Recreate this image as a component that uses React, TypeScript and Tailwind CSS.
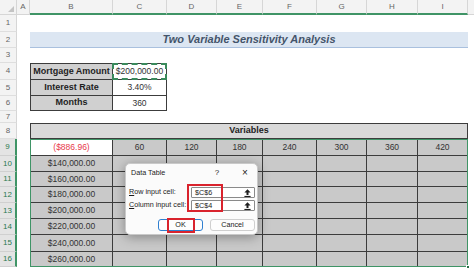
import React from "react";

const letters = ["B", "C", "D", "E", "F", "G", "H", "I"];
const hdrW = ["w-[83px]", "w-[54px]", "w-[50px]", "w-[46px]", "w-[54px]", "w-[50px]", "w-[51px]", "w-[50px]"];
// first column loses 1px to the table's left border
const cellW = ["w-[82px]", "w-[54px]", "w-[50px]", "w-[46px]", "w-[54px]", "w-[50px]", "w-[51px]", "w-[50px]"];

const rowH = [
  "h-[17px]", "h-[16px]", "h-[15px]", "h-[17px]", "h-[16px]", "h-[15px]", "h-[12px]", "h-[16px]",
  "h-[17px]", "h-[16px]", "h-[15px]", "h-[16px]", "h-[16px]", "h-[16px]", "h-[17px]", "h-[15px]",
];
const dataH = rowH.slice(8);

const amounts = ["$140,000.00", "$160,000.00", "$180,000.00", "$200,000.00", "$220,000.00", "$240,000.00", "$260,000.00"];
const months = ["60", "120", "180", "240", "300", "360", "420"];

const CollapseIcon = () => (
  <svg width="7" height="8" viewBox="0 0 7 8">
    <path d="M3.5 0.3 L6.6 3.6 H4.5 V6.1 H2.5 V3.6 H0.4 Z" fill="#1f1f1f" />
    <rect x="0.4" y="6.9" width="6.2" height="1.1" fill="#1f1f1f" />
  </svg>
);

function DataTableDialog() {
  return (
    <div className="absolute left-[125px] top-[163px] w-[133px] h-[72px] bg-[#fbfbfb] border border-[#c9c9c9] rounded-[5px] shadow-[0_2px_12px_rgba(0,0,0,0.35)] text-[7.2px] text-[#1b1b1b]">
      {/* title bar */}
      <div className="flex items-center h-[18px] pl-[5px] pr-[5px]">
        <span>Data Table</span>
        <span className="ml-auto w-[14px] text-center text-[8px]">?</span>
        <span className="ml-[14px] w-[14px] text-center text-[10px] leading-none">×</span>
      </div>

      <div className="mt-[5px] flex flex-col gap-[2px]">
        <div className="flex items-center h-[11px]">
          <span className="w-[65px] pl-[3px] whitespace-nowrap overflow-hidden">
            <span className="underline">R</span>ow input cell:
          </span>
          <div className="flex w-[64px] h-[11px] bg-white border border-[#8a8a8a] rounded-[1px]">
            <span className="flex-1 pl-[3px] leading-[9px]">$C$6</span>
            <span className="w-[13px] flex items-center justify-center">
              <CollapseIcon />
            </span>
          </div>
        </div>
        <div className="flex items-center h-[11px]">
          <span className="w-[65px] pl-[3px] whitespace-nowrap overflow-hidden">
            <span className="underline">C</span>olumn input cell:
          </span>
          <div className="flex w-[64px] h-[11px] bg-white border border-[#8a8a8a] rounded-[1px]">
            <span className="flex-1 pl-[3px] leading-[9px]">$C$4</span>
            <span className="w-[13px] flex items-center justify-center">
              <CollapseIcon />
            </span>
          </div>
        </div>
      </div>

      <div className="mt-[8px] flex justify-end gap-[7px] pr-[2px]">
        <button className="w-[45px] h-[12px] rounded-[3px] border border-[#2f7fd0] bg-[#fdfdfd] text-[7.2px] leading-none">
          OK
        </button>
        <button className="w-[45px] h-[12px] rounded-[3px] border border-[#cfcfcf] bg-[#fdfdfd] text-[7.2px] leading-none">
          Cancel
        </button>
      </div>

      {/* red highlight boxes */}
      <div className="absolute left-[61px] top-[20px] w-[36px] h-[28px] border-2 border-[#d9232d]" />
      <div className="absolute left-[41px] top-[54px] w-[28px] h-[15px] border-2 border-[#d9232d]" />
    </div>
  );
}

export default function App() {
  return (
    <div className="relative w-[474px] h-[271px] overflow-hidden bg-white font-['Liberation_Sans',Arial,sans-serif] text-[#222]">
      {/* column headers */}
      <div className="flex h-[15px] bg-[#f3f3f3] text-[8px] text-[#666]">
        <div className="relative w-[17px] border-r border-b border-[#d6d6d6]">
          <div className="absolute right-[2px] bottom-[2px] w-0 h-0 border-l-[6px] border-l-transparent border-b-[6px] border-b-[#c4c4c4]" />
        </div>
        <div className="w-[13px] flex items-center justify-center border-r border-b border-[#d6d6d6]">A</div>
        {letters.map((l, i) => (
          <div
            key={l}
            className={`${hdrW[i]} flex items-center justify-center border-r border-r-[#d6d6d6] border-b-2 border-b-[#3f9466]`}
          >
            {l}
          </div>
        ))}
        <div className="flex-1 border-b border-[#d6d6d6]" />
      </div>

      <div className="flex">
        {/* row headers */}
        <div className="w-[17px] flex flex-col text-[8px]">
          {rowH.map((h, i) => {
            const sel = i >= 8;
            return (
              <div
                key={i}
                className={`${h} flex items-center justify-center border-b ${
                  sel
                    ? "bg-[#e4e4e4] text-[#2a7a4f] border-b-[#d0d0d0] border-r-2 border-r-[#3f9466]"
                    : "bg-[#f3f3f3] text-[#666] border-b-[#dedede] border-r border-r-[#d6d6d6]"
                }`}
              >
                {i + 1}
              </div>
            );
          })}
        </div>

        {/* sheet content, column A left empty */}
        <div className="flex flex-col pl-[13px]">
          <div className="h-[17px]" />
          <div className="h-[16px] w-[438px] bg-[#dce6f2] border-b border-[#a9c0de] flex items-center justify-center">
            <span className="text-[11px] font-bold italic text-[#44546a] leading-none">
              Two Variable Sensitivity Analysis
            </span>
          </div>
          <div className="h-[15px]" />

          {/* inputs table */}
          <div className="w-[137px] border-t border-l border-[#3c3c3c] text-[8.5px]">
            {[
              ["Mortgage Amount", "$200,000.00", "h-[16px]"],
              ["Interest Rate", "3.40%", "h-[16px]"],
              ["Months", "360", "h-[15px]"],
            ].map(([label, value, h], i) => (
              <div key={label} className={`flex ${h}`}>
                <div className="w-[82px] bg-[#d0d0d0] border-r border-b border-[#3c3c3c] flex items-center justify-center font-bold text-[9px] text-[#1e1e1e]">
                  {label}
                </div>
                <div className="relative w-[54px] bg-white border-r border-b border-[#3c3c3c] flex items-center justify-center text-[#333]">
                  {value}
                  {i === 0 && (
                    <div className="absolute -inset-px border-2 border-dashed border-[#3a8a5c]" />
                  )}
                </div>
              </div>
            ))}
          </div>

          <div className="h-[12px]" />

          {/* data table */}
          <div className="relative w-[438px] border-t border-l border-[#3c3c3c] text-[8.5px] text-[#333]">
            <div className="h-[15px] bg-[#d9d9d9] border-r border-b border-[#3c3c3c] flex items-center justify-center font-bold text-[9px] text-[#1e1e1e]">
              Variables
            </div>
            {dataH.map((h, r) => (
              <div key={r} className={`flex ${h}`}>
                {cellW.map((w, c) => {
                  let text = "";
                  let cls = "bg-[#c9c9c9]";
                  if (r === 0 && c === 0) {
                    text = "($886.96)";
                    cls = "bg-white text-[#e8394a]";
                  } else if (r === 0) {
                    text = months[c - 1];
                  } else if (c === 0) {
                    text = amounts[r - 1];
                  }
                  return (
                    <div
                      key={c}
                      className={`${w} ${cls} border-r border-b border-[#3c3c3c] flex items-center justify-center`}
                    >
                      {text}
                    </div>
                  );
                })}
              </div>
            ))}
            {/* selection outline B9:I16 */}
            <div className="absolute left-[-1px] right-0 top-[15px] bottom-0 border border-[#3f9466]" />
            <div className="absolute right-[-2px] bottom-[-2px] w-[4px] h-[4px] bg-[#2a6f48] border border-white" />
          </div>
        </div>
      </div>

      <DataTableDialog />
    </div>
  );
}
